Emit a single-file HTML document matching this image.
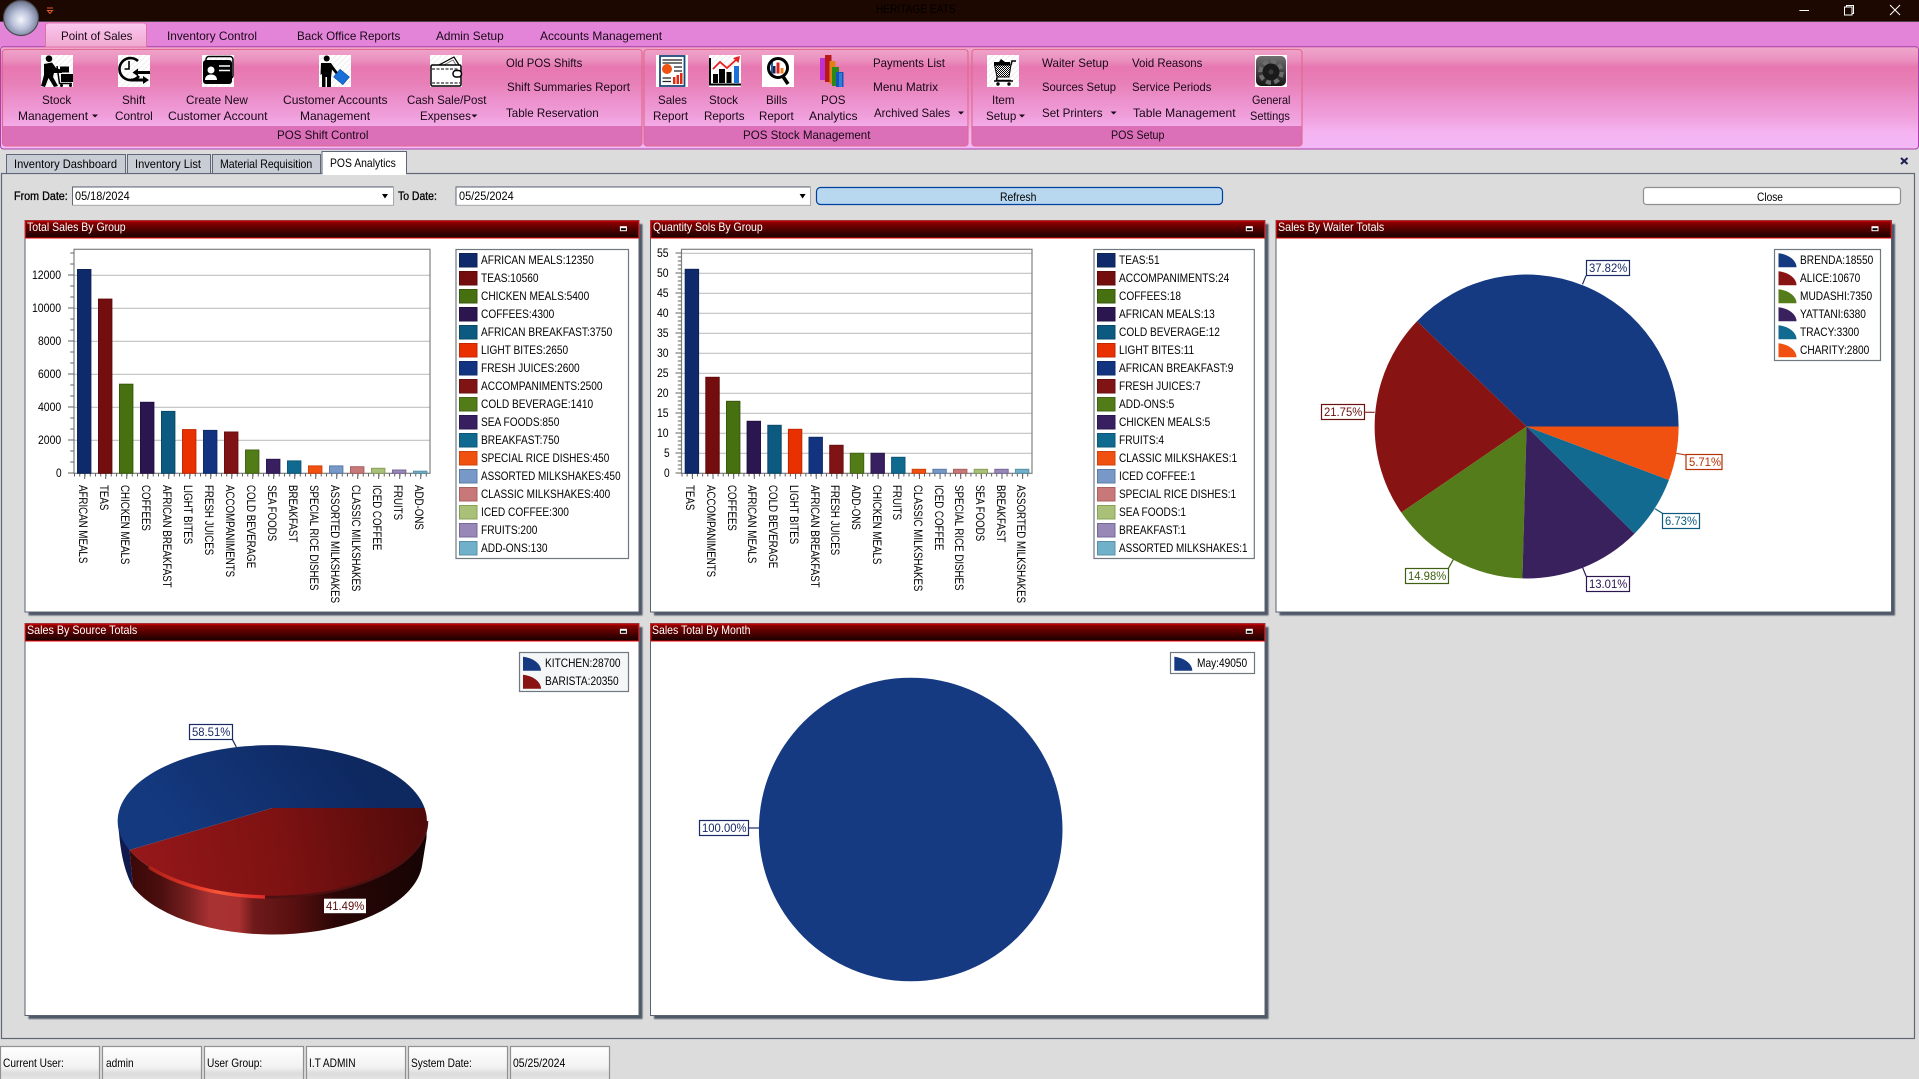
<!DOCTYPE html>
<html><head><meta charset="utf-8"><title>HERITAGE EATS</title>
<style>
html,body{margin:0;padding:0}
body{position:relative;width:1919px;height:1079px;overflow:hidden;background:#dcdcdc}
svg.bg{position:absolute;left:0;top:0}
i{position:absolute;white-space:nowrap;font:normal 12px/14px "Liberation Sans",sans-serif;color:#000;transform:scaleX(.845);transform-origin:0 0}
.r{transform:scaleX(.975);color:#180818}
.t{transform:scaleX(.875);color:#fff}
.l{transform:rotate(90deg) scaleX(.81);color:#000}
.p{transform:scaleX(.94)}
.c0{fill:#0e2a6a;stroke:#0c2458}.c1{fill:#740e0e;stroke:#5e0a0a}.c2{fill:#477010;stroke:#38580c}.c3{fill:#2c1650;stroke:#221040}
.c4{fill:#0c5a80;stroke:#0a4868}.c5{fill:#e83000;stroke:#c42800}.c6{fill:#123480;stroke:#0e2a68}.c7{fill:#801414;stroke:#681010}
.c8{fill:#527c18;stroke:#426414}.c9{fill:#382060;stroke:#2c1850}.c10{fill:#106a90;stroke:#0c5878}.c11{fill:#f05010;stroke:#d04008}
.c12{fill:#7898c8;stroke:#5c7ca8}.c13{fill:#c87878;stroke:#a86060}.c14{fill:#a8c078;stroke:#88a058}.c15{fill:#9888b8;stroke:#786898}.c16{fill:#70b0c8;stroke:#5890a8}
</style></head>
<body>
<svg class="bg" width="1919" height="1079" viewBox="0 0 1919 1079" xmlns="http://www.w3.org/2000/svg">
<defs>
<linearGradient id="rb" x1="0" y1="0" x2="0" y2="1">
<stop offset="0" stop-color="#f0a8cc"/><stop offset=".13" stop-color="#eb90c0"/><stop offset=".2" stop-color="#e777b0"/><stop offset=".36" stop-color="#e880b8"/><stop offset=".52" stop-color="#ec90cc"/><stop offset=".69" stop-color="#f0a0dc"/><stop offset=".84" stop-color="#f4b4f0"/><stop offset="1" stop-color="#f4b8f8"/>
</linearGradient>
<linearGradient id="ti" x1="0" y1="0" x2="0" y2="1"><stop offset="0" stop-color="#980000"/><stop offset=".35" stop-color="#640000"/><stop offset="1" stop-color="#160000"/></linearGradient>
<linearGradient id="tb" x1="0" y1="0" x2="0" y2="1"><stop offset="0" stop-color="#fac8f0"/><stop offset="1" stop-color="#f0a8d0"/></linearGradient>
<linearGradient id="st" x1="0" y1="0" x2="0" y2="1"><stop offset="0" stop-color="#fff"/><stop offset=".6" stop-color="#f2f2f2"/><stop offset=".8" stop-color="#dcdcdc"/><stop offset="1" stop-color="#e6e6e6"/></linearGradient>
<radialGradient id="orb" cx=".5" cy=".55" r=".6"><stop offset="0" stop-color="#f4f6fc"/><stop offset=".45" stop-color="#b8c0d8"/><stop offset=".8" stop-color="#7c84a0"/><stop offset="1" stop-color="#5a5e6c"/></radialGradient>
<linearGradient id="blueTop" gradientUnits="userSpaceOnUse" x1="200" y1="860" x2="340" y2="745"><stop offset="0" stop-color="#14397f"/><stop offset="1" stop-color="#0e2860"/></linearGradient>
<linearGradient id="redTop" gradientUnits="userSpaceOnUse" x1="130" y1="850" x2="424" y2="808"><stop offset="0" stop-color="#96181a"/><stop offset=".5" stop-color="#7e1212"/><stop offset="1" stop-color="#500a0a"/></linearGradient>
<linearGradient id="redSide" gradientUnits="userSpaceOnUse" x1="130" y1="0" x2="425" y2="0"><stop offset="0" stop-color="#3a0808"/><stop offset=".1" stop-color="#4a0e0e"/><stop offset=".2" stop-color="#7a2020"/><stop offset=".27" stop-color="#a83232"/><stop offset=".37" stop-color="#a83030"/><stop offset=".42" stop-color="#6e1a1a"/><stop offset=".55" stop-color="#5a1010"/><stop offset=".7" stop-color="#2a0606"/><stop offset="1" stop-color="#160404"/></linearGradient>
<linearGradient id="hl" gradientUnits="userSpaceOnUse" x1="149" y1="0" x2="265" y2="0"><stop offset="0" stop-color="#a82018"/><stop offset=".4" stop-color="#e83828"/><stop offset=".6" stop-color="#f85838"/><stop offset="1" stop-color="#e02828"/></linearGradient>
<linearGradient id="gear" x1="0" y1="0" x2="0" y2="1"><stop offset="0" stop-color="#707070"/><stop offset="1" stop-color="#141414"/></linearGradient>
<filter id="sb" x="-2%" y="-2%" width="104%" height="104%"><feGaussianBlur stdDeviation=".9"/></filter>
<pattern id="hat" width="4" height="4" patternUnits="userSpaceOnUse" patternTransform="rotate(45)"><rect width="4" height="4" fill="#fff"/><rect width="1" height="4" fill="#eee"/></pattern>
<pattern id="chk" width="2" height="2" patternUnits="userSpaceOnUse"><rect width="2" height="2" fill="#fff"/><rect width="1" height="1"/><rect x="1" y="1" width="1" height="1"/></pattern>
<path id="pw" d="M0 14V0C10 1 18 7 18 14Z"/>
<g id="min"><rect x="-3.500" y="-2.500" width="7" height="5" fill="#fff"/><rect x="-2.500" y="-.5" width="5" height="2" fill="#000"/></g>
</defs>

<!-- title bar -->
<rect width="1919" height="21.500" fill="#1c0800"/>
<rect y="21.500" width="1919" height="26" fill="#e484d8"/>
<rect y="21" width="1919" height="1" fill="#50404c"/>
<!-- ribbon -->
<rect x=".5" y="46.700" width="1918" height="102.300" rx="3" fill="url(#rb)" stroke="#a840a8"/>
<path d="M45.500 47V26q0-3 3-3h95q3 0 3 3v21z" fill="url(#tb)" stroke="#e070a8"/>
<g fill="none" stroke="#e0688c" stroke-width="1.100">
<rect x="2.500" y="49.500" width="639.500" height="96.500" rx="3"/>
<rect x="644" y="49.500" width="324" height="96.500" rx="3"/>
<rect x="972" y="49.500" width="330" height="96.500" rx="3"/>
</g>
<g fill="#dc70b8"><rect x="3" y="126" width="638.500" height="19.500"/><rect x="644.500" y="126" width="323" height="19.500"/><rect x="972.500" y="126" width="329" height="19.500"/></g>
<!-- orb -->
<circle cx="21" cy="18" r="17.500" fill="url(#orb)" stroke="#4a4a50" stroke-width="1.200"/>
<path d="M47 8h6M47.500 10.500l2.500 3 2.500-3z" fill="none" stroke="#e05828"/>
<!-- window controls -->
<g stroke="#fff" fill="none"><path d="M1799.400 10.500H1809"/><rect x="1844.500" y="7" width="7.500" height="8"/><path d="M1846.500 6.500V5.500h7v8h-1.500M1890 5l10 10M1900 5l-10 10"/></g>
<!-- ribbon arrows -->
<g fill="#180818"><path d="M92 114.500h6l-3 3zM471.400 114.500h6l-3 3zM1019 114.500h6l-3 3zM958 111.500h6l-3 3zM1110.600 111.500h6l-3 3z"/></g>

<!-- icons -->
<g transform="translate(41 55)"><rect width="32" height="32" fill="url(#hat)"/><circle cx="8" cy="3.700" r="3.300"/><path d="M3 9L11 7.500L15 13L21 15L21 18L13 18L12 22L17 31L13 32L7.500 23L4 32L0 31L3 20Z"/><rect x="19" y="11.500" width="9" height="6"/><rect x="20" y="19" width="12" height="8"/><path d="M16 11L18.500 28.500H31" fill="none" stroke="#000" stroke-width="1.500"/><circle cx="20.500" cy="30.500" r="1.500"/><circle cx="29.500" cy="30.500" r="1.500"/></g>
<g transform="translate(118 55)"><rect width="32" height="32" fill="url(#hat)"/><path d="M21 21A11 11 0 1 1 20 6" fill="none" stroke="#000" stroke-width="2.600"/><path d="M11 6V14H6.500" fill="none" stroke="#000" stroke-width="1.600"/><path d="M32 16H20V13.500L14.500 17.500L20 21.500V19H32z"/><path d="M13 23.500H25V21L31 25L25 29V26.500H13z"/></g>
<g transform="translate(202 55)"><rect width="32" height="32" fill="url(#hat)"/><rect x="4" y="1.500" width="27" height="22" rx="3" fill="none" stroke="#000" stroke-width="1.500"/><rect x="1" y="5" width="29" height="24" rx="3"/><circle cx="9" cy="15" r="3.500" fill="#fff"/><path d="M3 25c0-4 3-5.500 6-5.500s6 1.500 6 5.500z" fill="#fff"/><path d="M17 11H28M17 15.500H28" stroke="#fff" stroke-width="1.500"/></g>
<g transform="translate(319 55)"><rect width="32" height="32" fill="url(#hat)"/><circle cx="7.700" cy="3.500" r="3"/><path d="M2 8h10l2 3 6 8-2 1.500-5-6-1 8v9.500H8V22H6.500v10H3V19L1.500 20z"/><rect x="-6" y="-5" width="12" height="10" transform="translate(22.500 22) rotate(40)" fill="#1a70d8" stroke="#0c50a8" stroke-width=".7"/></g>
<g transform="translate(430 55)"><rect width="32" height="32" fill="url(#hat)"/><path d="M9 10L24 2L29 10" fill="#fff" stroke="#000" stroke-width="1.200"/><path d="M14 10l9-5 3 5" fill="none" stroke="#777"/><rect x="1" y="10" width="30" height="21" rx="1.500" fill="#fff" stroke="#000" stroke-width="1.500"/><path d="M2 14H28M2 28H30" stroke="#000" stroke-dasharray="3 1.500" fill="none"/><rect x="23" y="15.500" width="8.500" height="6.500" rx="3" fill="#fff" stroke="#000" stroke-width="1.500"/></g>
<g transform="translate(656 55)"><rect width="32" height="32" fill="#fff"/><rect x="4" y="1" width="24.500" height="30" fill="#fff" stroke="#1a4a7a" stroke-width="1.800"/><path d="M6.500 5H26M6.500 8H26" stroke="#222" stroke-width="1.200"/><circle cx="11" cy="14" r="5" fill="#f05010"/><path d="M18 12H26M18 16H26M6.500 23H15M6.500 26.500H15" stroke="#222" stroke-width="1.200"/><path d="M17 29v-7h2.500v7zM20.500 29v-9H23v9zM24 29V18h2.500v11z" fill="#e02a10"/></g>
<g transform="translate(709 55)"><rect width="32" height="32" fill="url(#hat)"/><path d="M1 3V29.500H32" fill="none" stroke="#000" stroke-width="2"/><rect x="4" y="19" width="5" height="9"/><rect x="10" y="14" width="6" height="14"/><rect x="17.500" y="17" width="5" height="11"/><rect x="25" y="11" width="5" height="17" fill="#1a70d8"/><path d="M4 14L11 7L18 13L28 4" fill="none" stroke="#e82020" stroke-width="1.800"/><path d="M24 3l7-2-1.500 7z" fill="#e82020"/></g>
<g transform="translate(762 55)"><rect width="32" height="32" fill="#fff"/><path d="M10.500 11h3v7.500h-3z" fill="#224"/><path d="M14.500 7.500h3V18.500h-3z" fill="#d82020"/><path d="M18.500 13h3v5.500h-3z" fill="#f08020"/><path d="M9 7h2v11.500H9z" fill="#1a60b0"/><circle cx="16" cy="13" r="9.500" fill="none" stroke="#000" stroke-width="3"/><path d="M21 21.500L26 29" stroke="#000" stroke-width="3.500"/></g>
<g transform="translate(820 55)"><rect x="0" y="3" width="6" height="22" fill="#c030d0"/><rect x="5" y="0" width="6.500" height="27" fill="#b81818"/><rect x="9.500" y="6" width="6" height="23" fill="#e08018"/><rect x="12" y="12" width="7" height="19" fill="#2a8a18"/><rect x="16" y="17" width="7.500" height="15" fill="#1a50b8"/><rect x="19" y="18" width="3" height="14" fill="#2a80d8"/></g>
<g transform="translate(987 55)"><rect width="32" height="32" fill="url(#hat)"/><path d="M7 7h5l2-3 4 3h5v3h-16z"/><path d="M7.500 10H24L22 22H10z" fill="url(#chk)" stroke="#000"/><path d="M24 10L25 6H29M10 22.500L9.500 25.500H24" fill="none" stroke="#000" stroke-width="1.500"/><path d="M7 26H26" stroke="#000" stroke-width="1.500"/><circle cx="11" cy="29" r="1.700"/><circle cx="22" cy="29" r="1.700"/></g>
<g transform="translate(1255 55)"><rect width="32" height="32" fill="#fff"/><rect x="1" y="1" width="30" height="30" rx="5" fill="url(#gear)"/><circle cx="16" cy="17" r="10.500" fill="none" stroke="#6c6c6c" stroke-width="4.500" stroke-dasharray="5 3.200"/><circle cx="16" cy="17" r="8.500" fill="#1a1a1a"/><circle cx="16" cy="17" r="2.500" fill="#3a3a3a"/></g>

<!-- pane and doc tabs -->
<rect x="1.500" y="173.500" width="1913" height="865" fill="#dcdcdc" stroke="#606878" stroke-width="1.200"/>
<g fill="#c8ccd4" stroke="#606878"><rect x="6.500" y="154.500" width="119" height="19"/><rect x="127.500" y="154.500" width="83" height="19"/><rect x="212.500" y="154.500" width="108" height="19"/></g>
<path d="M322 174V151.500H406.500V174" fill="#fff" stroke="#606878"/>
<rect x="322.500" y="172" width="83.500" height="3" fill="#fff"/>
<path d="M1901 158l6.500 6M1907.500 158l-6.500 6" stroke="#1c2050" stroke-width="2"/>

<!-- toolbar -->
<g fill="#fff" stroke="#a8a8a8"><rect x="72.500" y="186.800" width="321" height="18.500"/><rect x="456" y="186.800" width="354.500" height="18.500"/></g>
<path d="M393 187H72.500V205M810 187H456V205" fill="none" stroke="#606878"/>
<path d="M382 194h6l-3 4.500zM799.600 194h6l-3 4.500z"/>
<rect x="816.500" y="187.500" width="406" height="17" rx="4" fill="#b8d8f0" stroke="#0040a0" stroke-width="1.200"/>
<rect x="1643.500" y="187.500" width="257" height="17" rx="3" fill="#fff" stroke="#909090" stroke-width="1.200"/>

<!-- panels -->
<g fill="#505868" filter="url(#sb)">
<rect x="28.500" y="224" width="614" height="391.500"/>
<rect x="654" y="224" width="614.500" height="391.500"/>
<rect x="1279.500" y="224" width="615.500" height="391.500"/>
<rect x="28.500" y="627" width="614" height="392"/>
<rect x="654" y="627" width="614.500" height="392"/>
</g>
<g fill="#fff" stroke="#5a6270"><rect x="25" y="220.500" width="614" height="391.500"/><rect x="650.500" y="220.500" width="614.500" height="391.500"/><rect x="1276" y="220.500" width="615.500" height="391.500"/><rect x="25" y="623.500" width="614" height="392"/><rect x="650.500" y="623.500" width="614.500" height="392"/></g>
<g fill="url(#ti)" stroke="#e80000"><path d="M25.500 238V221H638.500V238z"/><path d="M651 238V221H1264.500V238z"/><path d="M1276.500 238V221H1891V238z"/><path d="M25.500 641V624H638.500V641z"/><path d="M651 641V624H1264.500V641z"/></g>
<use href="#min" x="623.400" y="228.700"/><use href="#min" x="1249.300" y="228.700"/><use href="#min" x="1875" y="228.700"/><use href="#min" x="623.400" y="631.300"/><use href="#min" x="1249.300" y="631.300"/>

<!-- chart 1 -->
<g stroke="#c0c0c0" stroke-width="1.200"><path d="M74 440.300H430M74 407.300H430M74 374.300H430M74 341.300H430M74 308.300H430M74 275.300H430"/></g>
<rect x="74" y="249.300" width="356" height="224" fill="none" stroke="#808080" stroke-width="1.200"/>
<g stroke="#606060" fill="none">
<line x1="72" y1="473.500" x2="72" y2="250" stroke-width="3.500" stroke-dasharray="1 10"/>
<line x1="71" y1="473.500" x2="71" y2="250" stroke-width="6" stroke-dasharray="1 32"/>
<line x1="74" y1="475" x2="430" y2="475" stroke-width="3" stroke-dasharray="1 4.250"/>
<line x1="84.200" y1="476" x2="430" y2="476" stroke-width="6" stroke-dasharray="1 20"/>
</g>
<g stroke-width="1">
<rect class="c0" x="77.500" y="269.500" width="13.400" height="203.800"/>
<rect class="c1" x="98.500" y="299.100" width="13.400" height="174.200"/>
<rect class="c2" x="119.500" y="384.200" width="13.400" height="89.100"/>
<rect class="c3" x="140.500" y="402.300" width="13.400" height="71"/>
<rect class="c4" x="161.500" y="411.400" width="13.400" height="61.900"/>
<rect class="c5" x="182.500" y="429.600" width="13.400" height="43.700"/>
<rect class="c6" x="203.500" y="430.400" width="13.400" height="42.900"/>
<rect class="c7" x="224.500" y="432" width="13.400" height="41.300"/>
<rect class="c8" x="245.500" y="450" width="13.400" height="23.300"/>
<rect class="c9" x="266.500" y="459.300" width="13.400" height="14"/>
<rect class="c10" x="287.500" y="460.900" width="13.400" height="12.400"/>
<rect class="c11" x="308.500" y="465.900" width="13.400" height="7.400"/>
<rect class="c12" x="329.500" y="465.900" width="13.400" height="7.400"/>
<rect class="c13" x="350.500" y="466.700" width="13.400" height="6.600"/>
<rect class="c14" x="371.500" y="468.300" width="13.400" height="5"/>
<rect class="c15" x="392.500" y="470" width="13.400" height="3.300"/>
<rect class="c16" x="413.500" y="471.200" width="13.400" height="2.100"/>
</g>
<rect x="456" y="249.500" width="172.500" height="309" fill="#fff" stroke="#707880" stroke-width="1.200"/>
<g stroke-width="1">
<rect class="c0" x="459.500" y="253.500" width="17.500" height="13.500"/><rect class="c1" x="459.500" y="271.500" width="17.500" height="13.500"/><rect class="c2" x="459.500" y="289.500" width="17.500" height="13.500"/><rect class="c3" x="459.500" y="307.500" width="17.500" height="13.500"/><rect class="c4" x="459.500" y="325.500" width="17.500" height="13.500"/><rect class="c5" x="459.500" y="343.500" width="17.500" height="13.500"/><rect class="c6" x="459.500" y="361.500" width="17.500" height="13.500"/><rect class="c7" x="459.500" y="379.500" width="17.500" height="13.500"/><rect class="c8" x="459.500" y="397.500" width="17.500" height="13.500"/><rect class="c9" x="459.500" y="415.500" width="17.500" height="13.500"/><rect class="c10" x="459.500" y="433.500" width="17.500" height="13.500"/><rect class="c11" x="459.500" y="451.500" width="17.500" height="13.500"/><rect class="c12" x="459.500" y="469.500" width="17.500" height="13.500"/><rect class="c13" x="459.500" y="487.500" width="17.500" height="13.500"/><rect class="c14" x="459.500" y="505.500" width="17.500" height="13.500"/><rect class="c15" x="459.500" y="523.500" width="17.500" height="13.500"/><rect class="c16" x="459.500" y="541.500" width="17.500" height="13.500"/>
</g>

<!-- chart 2 -->
<g stroke="#c0c0c0" stroke-width="1.200"><path d="M681.500 453.300H1032M681.500 433.300H1032M681.500 413.300H1032M681.500 393.300H1032M681.500 373.300H1032M681.500 353.300H1032M681.500 333.300H1032M681.500 313.300H1032M681.500 293.300H1032M681.500 273.300H1032M681.500 253.300H1032"/></g>
<rect x="681.500" y="249.300" width="350.500" height="224" fill="none" stroke="#808080" stroke-width="1.200"/>
<g stroke="#606060" fill="none">
<line x1="679.500" y1="473.500" x2="679.500" y2="250" stroke-width="3.500" stroke-dasharray="1 3"/>
<line x1="678.500" y1="473.500" x2="678.500" y2="250" stroke-width="6" stroke-dasharray="1 19"/>
<line x1="681.500" y1="475" x2="1032" y2="475" stroke-width="3" stroke-dasharray="1 4.160"/>
<line x1="691.900" y1="476" x2="1032" y2="476" stroke-width="6" stroke-dasharray="1 19.640"/>
</g>
<g stroke-width="1">
<rect class="c0" x="685.200" y="269.300" width="13.400" height="204"/>
<rect class="c1" x="705.800" y="377.300" width="13.400" height="96"/>
<rect class="c2" x="726.500" y="401.300" width="13.400" height="72"/>
<rect class="c3" x="747.100" y="421.300" width="13.400" height="52"/>
<rect class="c4" x="767.800" y="425.300" width="13.400" height="48"/>
<rect class="c5" x="788.400" y="429.300" width="13.400" height="44"/>
<rect class="c6" x="809" y="437.300" width="13.400" height="36"/>
<rect class="c7" x="829.700" y="445.300" width="13.400" height="28"/>
<rect class="c8" x="850.300" y="453.300" width="13.400" height="20"/>
<rect class="c9" x="871" y="453.300" width="13.400" height="20"/>
<rect class="c10" x="891.600" y="457.300" width="13.400" height="16"/>
<rect class="c11" x="912.200" y="469.300" width="13.400" height="4"/>
<rect class="c12" x="932.900" y="469.300" width="13.400" height="4"/>
<rect class="c13" x="953.500" y="469.300" width="13.400" height="4"/>
<rect class="c14" x="974.200" y="469.300" width="13.400" height="4"/>
<rect class="c15" x="994.800" y="469.300" width="13.400" height="4"/>
<rect class="c16" x="1015.400" y="469.300" width="13.400" height="4"/>
</g>
<rect x="1094" y="249.500" width="160.300" height="309" fill="#fff" stroke="#707880" stroke-width="1.200"/>
<g stroke-width="1">
<rect class="c0" x="1097.500" y="253.500" width="17.500" height="13.500"/><rect class="c1" x="1097.500" y="271.500" width="17.500" height="13.500"/><rect class="c2" x="1097.500" y="289.500" width="17.500" height="13.500"/><rect class="c3" x="1097.500" y="307.500" width="17.500" height="13.500"/><rect class="c4" x="1097.500" y="325.500" width="17.500" height="13.500"/><rect class="c5" x="1097.500" y="343.500" width="17.500" height="13.500"/><rect class="c6" x="1097.500" y="361.500" width="17.500" height="13.500"/><rect class="c7" x="1097.500" y="379.500" width="17.500" height="13.500"/><rect class="c8" x="1097.500" y="397.500" width="17.500" height="13.500"/><rect class="c9" x="1097.500" y="415.500" width="17.500" height="13.500"/><rect class="c10" x="1097.500" y="433.500" width="17.500" height="13.500"/><rect class="c11" x="1097.500" y="451.500" width="17.500" height="13.500"/><rect class="c12" x="1097.500" y="469.500" width="17.500" height="13.500"/><rect class="c13" x="1097.500" y="487.500" width="17.500" height="13.500"/><rect class="c14" x="1097.500" y="505.500" width="17.500" height="13.500"/><rect class="c15" x="1097.500" y="523.500" width="17.500" height="13.500"/><rect class="c16" x="1097.500" y="541.500" width="17.500" height="13.500"/>
</g>

<!-- chart 3 pie -->
<path d="M1526.600 426.500H1678.600A152 152 0 0 0 1417 321.200Z" fill="#153a82"/>
<path d="M1526.600 426.500L1417 321.200A152 152 0 0 0 1401.300 512.500Z" fill="#871412"/>
<path d="M1526.600 426.500L1401.300 512.500A152 152 0 0 0 1522.400 578.400Z" fill="#557c1a"/>
<path d="M1526.600 426.500L1522.400 578.400A152 152 0 0 0 1634.500 533.600Z" fill="#39215e"/>
<path d="M1526.600 426.500L1634.500 533.600A152 152 0 0 0 1668.900 480Z" fill="#136a90"/>
<path d="M1526.600 426.500L1668.900 480A152 152 0 0 0 1678.600 426.500Z" fill="#f05010"/>
<g fill="#fff" stroke-width="1.200">
<rect x="1586.500" y="260.500" width="43" height="15" stroke="#1a2a66"/><path d="M1582.500 284.300L1586 275.700" stroke="#1a2a66"/>
<rect x="1321.500" y="404.500" width="43" height="15" stroke="#6a1010"/><path d="M1364.500 412.300H1374.700" stroke="#8a3030"/>
<rect x="1686" y="454.500" width="36" height="15" stroke="#b83000"/><path d="M1676 453.300L1686 455" stroke="#b85030"/>
<rect x="1662.500" y="513.500" width="37" height="15" stroke="#0c5a80"/><path d="M1655 508.700L1662.400 513.300" stroke="#0c5a80"/>
<rect x="1586.500" y="576.500" width="43" height="15" stroke="#2c1650"/><path d="M1582.500 567.300L1586.200 576.300" stroke="#2c1650"/>
<rect x="1405.500" y="568.500" width="43" height="15" stroke="#3e6012"/><path d="M1453.400 559.300L1448.400 568.300" stroke="#3e6012"/>
</g>
<rect x="1774.500" y="249.500" width="106" height="111" fill="#fff" stroke="#707880" stroke-width="1.200"/>
<use href="#pw" x="1778.500" y="253.300" fill="#153a82"/><use href="#pw" x="1778.500" y="271.300" fill="#871412"/><use href="#pw" x="1778.500" y="289.300" fill="#557c1a"/><use href="#pw" x="1778.500" y="307.300" fill="#39215e"/><use href="#pw" x="1778.500" y="325.300" fill="#136a90"/><use href="#pw" x="1778.500" y="343.300" fill="#f05010"/>

<!-- chart 4 3D pie -->
<path d="M118 825L129.500 850L133 887Q122 868 119 833Z" fill="#101a4c"/>
<path d="M129.500 850A154.600 75.800 0 0 0 426.900 821L426.500 838L422 866A150 75 0 0 1 133 887Z" fill="url(#redSide)"/>
<path d="M272.300 808L424.600 808A154.600 75.800 0 0 1 426.900 821A154.600 75.800 0 0 1 129.500 850Z" fill="url(#redTop)"/>
<path d="M272.300 808L424.600 808A154.600 75.800 0 1 0 129.500 850Z" fill="url(#blueTop)"/>
<path d="M149 867A154.600 75.800 0 0 0 265 897" fill="none" stroke="url(#hl)" stroke-width="3.500"/>
<path d="M265 897A154.600 75.800 0 0 0 427 821" fill="none" stroke="#4e1010" stroke-width="2.500"/>
<rect x="189.500" y="724.500" width="43" height="15" fill="#fff" stroke="#1a2a66" stroke-width="1.200"/>
<path d="M232.500 739.700L236.300 747" stroke="#1a2a66" stroke-width="1.200"/>
<rect x="324" y="898.700" width="42" height="14.500" fill="#fff"/>
<rect x="519.500" y="652.500" width="109" height="39" fill="#f4f6f8" stroke="#707880" stroke-width="1.200"/>
<use href="#pw" x="523" y="656.700" fill="#153a82"/><use href="#pw" x="523" y="674.700" fill="#871412"/>

<!-- chart 5 -->
<circle cx="910.700" cy="829.500" r="151.800" fill="#153a82"/>
<rect x="699.500" y="820.500" width="49" height="15" fill="#fff" stroke="#1a2a66" stroke-width="1.200"/>
<path d="M748.600 828H759" stroke="#1a2a66" stroke-width="1.200"/>
<rect x="1170.500" y="652.500" width="84" height="21" fill="#fff" stroke="#707880" stroke-width="1.200"/>
<use href="#pw" x="1174.300" y="656.700" fill="#153a82"/>

<!-- status bar -->
<g fill="url(#st)" stroke="#909090" stroke-width="1.200">
<rect x=".5" y="1046.500" width="99" height="34"/><rect x="102.500" y="1046.500" width="99" height="34"/><rect x="204.500" y="1046.500" width="99" height="34"/><rect x="306.500" y="1046.500" width="99" height="34"/><rect x="408.500" y="1046.500" width="99" height="34"/><rect x="510.500" y="1046.500" width="99" height="34"/>
</g>
</svg>

<!-- top text -->
<i style="left:876px;top:2px">HERITAGE EATS</i>
<i class="r" style="left:61px;top:29px;transform:scaleX(.965)">Point of Sales</i>
<i class="r" style="left:167px;top:29px;transform:scaleX(.985)">Inventory Control</i>
<i class="r" style="left:297px;top:29px;transform:scaleX(.97)">Back Office Reports</i>
<i class="r" style="left:436px;top:29px;transform:scaleX(.985)">Admin Setup</i>
<i class="r" style="left:540px;top:29px;transform:scaleX(.995)">Accounts Management</i>

<i class="r" style="left:42px;top:93px">Stock</i>
<i class="r" style="left:18px;top:109px;transform:scaleX(1)">Management</i>
<i class="r" style="left:121.500px;top:93px">Shift</i>
<i class="r" style="left:114.500px;top:109px">Control</i>
<i class="r" style="left:186px;top:93px">Create New</i>
<i class="r" style="left:167.500px;top:109px;transform:scaleX(1.015)">Customer Account</i>
<i class="r" style="left:282.500px;top:93px;transform:scaleX(1.005)">Customer Accounts</i>
<i class="r" style="left:300px;top:109px;transform:scaleX(1)">Management</i>
<i class="r" style="left:407px;top:93px;transform:scaleX(.96)">Cash Sale/Post</i>
<i class="r" style="left:420px;top:109px;transform:scaleX(.965)">Expenses</i>
<i class="r" style="left:505.500px;top:56px;transform:scaleX(.945)">Old POS Shifts</i>
<i class="r" style="left:507px;top:80px;transform:scaleX(.965)">Shift Summaries Report</i>
<i class="r" style="left:506px;top:106px;transform:scaleX(.965)">Table Reservation</i>
<i class="r" style="left:277px;top:128px;transform:scaleX(.965)">POS Shift Control</i>

<i class="r" style="left:658px;top:93px;transform:scaleX(.965)">Sales</i>
<i class="r" style="left:653px;top:109px">Report</i>
<i class="r" style="left:709px;top:93px;transform:scaleX(.965)">Stock</i>
<i class="r" style="left:704px;top:109px;transform:scaleX(.965)">Reports</i>
<i class="r" style="left:766px;top:93px;transform:scaleX(.965)">Bills</i>
<i class="r" style="left:759px;top:109px;transform:scaleX(.965)">Report</i>
<i class="r" style="left:820.500px;top:93px;transform:scaleX(.965)">POS</i>
<i class="r" style="left:809px;top:109px;transform:scaleX(1.01)">Analytics</i>
<i class="r" style="left:872.500px;top:56px;transform:scaleX(.955)">Payments List</i>
<i class="r" style="left:872.500px;top:80px;transform:scaleX(.985)">Menu Matrix</i>
<i class="r" style="left:874px;top:106px;transform:scaleX(.95)">Archived Sales</i>
<i class="r" style="left:742.500px;top:128px;transform:scaleX(.965)">POS Stock Management</i>

<i class="r" style="left:991.500px;top:93px;transform:scaleX(.965)">Item</i>
<i class="r" style="left:986px;top:109px;transform:scaleX(.965)">Setup</i>
<i class="r" style="left:1042px;top:56px;transform:scaleX(.965)">Waiter Setup</i>
<i class="r" style="left:1041.500px;top:80px;transform:scaleX(.94)">Sources Setup</i>
<i class="r" style="left:1041.500px;top:106px;transform:scaleX(.965)">Set Printers</i>
<i class="r" style="left:1132px;top:56px;transform:scaleX(.95)">Void Reasons</i>
<i class="r" style="left:1132px;top:80px;transform:scaleX(.945)">Service Periods</i>
<i class="r" style="left:1133px;top:106px;transform:scaleX(1.005)">Table Management</i>
<i class="r" style="left:1251.500px;top:93px;transform:scaleX(.9)">General</i>
<i class="r" style="left:1250px;top:109px;transform:scaleX(.92)">Settings</i>
<i class="r" style="left:1110.500px;top:128px;transform:scaleX(.89)">POS Setup</i>

<i style="left:13.500px;top:157px;transform:scaleX(.925)">Inventory Dashboard</i>
<i style="left:134.700px;top:157px;transform:scaleX(.925)">Inventory List</i>
<i style="left:219.700px;top:157px;transform:scaleX(.875)">Material Requisition</i>
<i style="left:330.400px;top:156px;transform:scaleX(.865)">POS Analytics</i>

<i style="left:13.500px;top:189px;transform:scaleX(.896);-webkit-text-stroke:.3px #000">From Date:</i>
<i style="left:75px;top:189px;transform:scaleX(.91)">05/18/2024</i>
<i style="left:398px;top:189px;transform:scaleX(.87);-webkit-text-stroke:.3px #000">To Date:</i>
<i style="left:459px;top:189px;transform:scaleX(.91)">05/25/2024</i>
<i style="left:1000px;top:190px;transform:scaleX(.866)">Refresh</i>
<i style="left:1757px;top:190px">Close</i>

<!-- panel titles -->
<i class="t" style="left:27.200px;top:220px">Total Sales By Group</i>
<i class="t" style="left:652.500px;top:220px">Quantity Sols By Group</i>
<i class="t" style="left:1277.500px;top:220px;transform:scaleX(.89)">Sales By Waiter Totals</i>
<i class="t" style="left:26.500px;top:623px;transform:scaleX(.895)">Sales By Source Totals</i>
<i class="t" style="left:652px;top:623px">Sales Total By Month</i>

<!-- chart 1 y labels -->
<i style="left:32.300px;top:268px;transform:scaleX(.87)">12000</i>
<i style="left:32.300px;top:301px;transform:scaleX(.87)">10000</i>
<i style="left:38px;top:334px;transform:scaleX(.87)">8000</i>
<i style="left:38px;top:367px;transform:scaleX(.87)">6000</i>
<i style="left:38px;top:400px;transform:scaleX(.87)">4000</i>
<i style="left:38px;top:433px;transform:scaleX(.87)">2000</i>
<i style="left:56px;top:466px">0</i>
<!-- chart 1 x labels -->
<i class="l" style="left:90.100px;top:485px">AFRICAN MEALS</i>
<i class="l" style="left:111px;top:485px">TEAS</i>
<i class="l" style="left:131.600px;top:485px">CHICKEN MEALS</i>
<i class="l" style="left:152.600px;top:485px">COFFEES</i>
<i class="l" style="left:173.600px;top:485px">AFRICAN BREAKFAST</i>
<i class="l" style="left:194.600px;top:485px">LIGHT BITES</i>
<i class="l" style="left:215.600px;top:485px">FRESH JUICES</i>
<i class="l" style="left:236.600px;top:485px">ACCOMPANIMENTS</i>
<i class="l" style="left:257.600px;top:485px">COLD BEVERAGE</i>
<i class="l" style="left:278.600px;top:485px">SEA FOODS</i>
<i class="l" style="left:299.600px;top:485px">BREAKFAST</i>
<i class="l" style="left:320.600px;top:485px">SPECIAL RICE DISHES</i>
<i class="l" style="left:341.600px;top:485px">ASSORTED MILKSHAKES</i>
<i class="l" style="left:362.600px;top:485px">CLASSIC MILKSHAKES</i>
<i class="l" style="left:383.600px;top:485px">ICED COFFEE</i>
<i class="l" style="left:404.600px;top:485px">FRUITS</i>
<i class="l" style="left:425.600px;top:485px">ADD-ONS</i>
<!-- chart 1 legend -->
<i style="left:481px;top:253px">AFRICAN MEALS:12350</i>
<i style="left:481px;top:271px">TEAS:10560</i>
<i style="left:481px;top:289px">CHICKEN MEALS:5400</i>
<i style="left:481px;top:307px">COFFEES:4300</i>
<i style="left:481px;top:325px">AFRICAN BREAKFAST:3750</i>
<i style="left:481px;top:343px">LIGHT BITES:2650</i>
<i style="left:481px;top:361px">FRESH JUICES:2600</i>
<i style="left:481px;top:379px">ACCOMPANIMENTS:2500</i>
<i style="left:481px;top:397px">COLD BEVERAGE:1410</i>
<i style="left:481px;top:415px">SEA FOODS:850</i>
<i style="left:481px;top:433px">BREAKFAST:750</i>
<i style="left:481px;top:451px;transform:scaleX(.835)">SPECIAL RICE DISHES:450</i>
<i style="left:481px;top:469px;transform:scaleX(.825)">ASSORTED MILKSHAKES:450</i>
<i style="left:481px;top:487px;transform:scaleX(.835)">CLASSIC MILKSHAKES:400</i>
<i style="left:481px;top:505px">ICED COFFEE:300</i>
<i style="left:481px;top:523px">FRUITS:200</i>
<i style="left:481px;top:541px">ADD-ONS:130</i>

<!-- chart 2 y labels -->
<i style="left:657.400px;top:246px;transform:scaleX(.87)">55</i>
<i style="left:657.400px;top:266px;transform:scaleX(.87)">50</i>
<i style="left:657.400px;top:286px;transform:scaleX(.87)">45</i>
<i style="left:657.400px;top:306px;transform:scaleX(.87)">40</i>
<i style="left:657.400px;top:326px;transform:scaleX(.87)">35</i>
<i style="left:657.400px;top:346px;transform:scaleX(.87)">30</i>
<i style="left:657.400px;top:366px;transform:scaleX(.87)">25</i>
<i style="left:657.400px;top:386px;transform:scaleX(.87)">20</i>
<i style="left:657.400px;top:406px;transform:scaleX(.87)">15</i>
<i style="left:657.400px;top:426px;transform:scaleX(.87)">10</i>
<i style="left:663.600px;top:446px">5</i>
<i style="left:663.600px;top:466px">0</i>
<!-- chart 2 x labels -->
<i class="l" style="left:697.400px;top:485px">TEAS</i>
<i class="l" style="left:718px;top:485px">ACCOMPANIMENTS</i>
<i class="l" style="left:738.700px;top:485px">COFFEES</i>
<i class="l" style="left:759.300px;top:485px">AFRICAN MEALS</i>
<i class="l" style="left:780px;top:485px">COLD BEVERAGE</i>
<i class="l" style="left:800.600px;top:485px">LIGHT BITES</i>
<i class="l" style="left:821.700px;top:485px">AFRICAN BREAKFAST</i>
<i class="l" style="left:842.400px;top:485px">FRESH JUICES</i>
<i class="l" style="left:863px;top:485px">ADD-ONS</i>
<i class="l" style="left:883.700px;top:485px">CHICKEN MEALS</i>
<i class="l" style="left:904.300px;top:485px">FRUITS</i>
<i class="l" style="left:925px;top:485px">CLASSIC MILKSHAKES</i>
<i class="l" style="left:945.700px;top:485px">ICED COFFEE</i>
<i class="l" style="left:966.300px;top:485px">SPECIAL RICE DISHES</i>
<i class="l" style="left:987px;top:485px">SEA FOODS</i>
<i class="l" style="left:1007.600px;top:485px">BREAKFAST</i>
<i class="l" style="left:1028.400px;top:485px">ASSORTED MILKSHAKES</i>
<!-- chart 2 legend -->
<i style="left:1119px;top:253px">TEAS:51</i>
<i style="left:1119px;top:271px">ACCOMPANIMENTS:24</i>
<i style="left:1119px;top:289px">COFFEES:18</i>
<i style="left:1119px;top:307px">AFRICAN MEALS:13</i>
<i style="left:1119px;top:325px">COLD BEVERAGE:12</i>
<i style="left:1119px;top:343px">LIGHT BITES:11</i>
<i style="left:1119px;top:361px">AFRICAN BREAKFAST:9</i>
<i style="left:1119px;top:379px">FRESH JUICES:7</i>
<i style="left:1119px;top:397px">ADD-ONS:5</i>
<i style="left:1119px;top:415px">CHICKEN MEALS:5</i>
<i style="left:1119px;top:433px">FRUITS:4</i>
<i style="left:1119px;top:451px;transform:scaleX(.835)">CLASSIC MILKSHAKES:1</i>
<i style="left:1119px;top:469px">ICED COFFEE:1</i>
<i style="left:1119px;top:487px;transform:scaleX(.835)">SPECIAL RICE DISHES:1</i>
<i style="left:1119px;top:505px">SEA FOODS:1</i>
<i style="left:1119px;top:523px">BREAKFAST:1</i>
<i style="left:1119px;top:541px;transform:scaleX(.825)">ASSORTED MILKSHAKES:1</i>

<!-- chart 3 labels -->
<i class="p" style="left:1589px;top:261px;color:#1a2a66">37.82%</i>
<i class="p" style="left:1324px;top:405px;color:#6a1010">21.75%</i>
<i class="p" style="left:1688.500px;top:455px;color:#b83000">5.71%</i>
<i class="p" style="left:1665px;top:514px;color:#0c5a80">6.73%</i>
<i class="p" style="left:1589px;top:577px;color:#2c1650">13.01%</i>
<i class="p" style="left:1408px;top:569px;color:#3e6012">14.98%</i>
<i style="left:1800px;top:253px">BRENDA:18550</i>
<i style="left:1800px;top:271px">ALICE:10670</i>
<i style="left:1800px;top:289px">MUDASHI:7350</i>
<i style="left:1800px;top:307px">YATTANI:6380</i>
<i style="left:1800px;top:325px">TRACY:3300</i>
<i style="left:1800px;top:343px">CHARITY:2800</i>

<!-- chart 4 labels -->
<i class="p" style="left:192px;top:725px;color:#1a2a66">58.51%</i>
<i class="p" style="left:326px;top:899px;color:#5a0c0c">41.49%</i>
<i style="left:545px;top:656px">KITCHEN:28700</i>
<i style="left:545px;top:674px">BARISTA:20350</i>

<!-- chart 5 labels -->
<i class="p" style="left:702px;top:821px;color:#1a2a66">100.00%</i>
<i style="left:1196.700px;top:656px">May:49050</i>

<!-- status text -->
<i style="left:3.300px;top:1056px">Current User:</i>
<i style="left:105.700px;top:1056px">admin</i>
<i style="left:206.500px;top:1056px">User Group:</i>
<i style="left:309.200px;top:1056px">I.T ADMIN</i>
<i style="left:410.600px;top:1056px">System Date:</i>
<i style="left:513.200px;top:1056px;transform:scaleX(.87)">05/25/2024</i>
</body></html>
